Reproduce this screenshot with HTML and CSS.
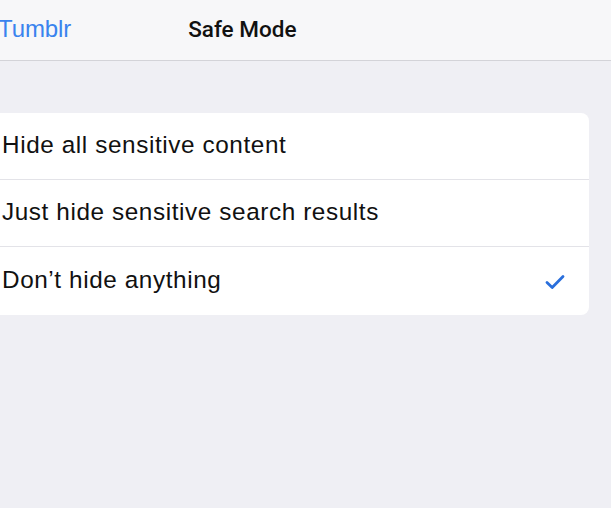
FILE: index.html
```html
<!DOCTYPE html>
<html lang="en">
<head>
<meta charset="utf-8">
<title>Safe Mode</title>
<link rel="stylesheet" href="styles.css">
</head>
<body>
<header class="navbar">
  <span class="back">Tumblr</span>
  <span class="title">Safe Mode</span>
</header>
<main class="content">
  <ul class="options">
    <li class="option">Hide all sensitive content</li>
    <li class="option">Just hide sensitive search results</li>
    <li class="option selected">Don’t hide anything
      <svg class="check" viewBox="0 0 20 16" width="20" height="16" aria-hidden="true">
        <path d="M2 8.5 L7.2 13.5 L18 2.5" fill="none" stroke="#2a6fdc" stroke-width="2.8" stroke-linecap="round" stroke-linejoin="round"/>
      </svg>
    </li>
  </ul>
</main>
</body>
</html>
```

FILE: styles.css
```css
* { box-sizing: border-box; }
html, body {
  margin: 0;
  padding: 0;
}
body {
  background: #efeff4;
  font-family: "Liberation Sans", Arial, sans-serif;
  color: #111;
  overflow: hidden;
  height: 508px;
}
.navbar {
  height: 61px;
  background: #f7f7f9;
  border-bottom: 1px solid #d3d3d8;
  display: flex;
  align-items: center;
  padding-bottom: 3px;
  gap: 117px;
}
.back {
  margin-left: -2px;
  font-size: 24px;
  color: #3a83ee;
  letter-spacing: -0.1px;
}
.title {
  font-family: Roboto, "Liberation Sans", sans-serif;
  font-size: 22.5px;
  font-weight: 500;
  color: #111;
  letter-spacing: 0;
}
.content {
  padding-top: 52px;
}
.options {
  list-style: none;
  margin: 0 22px 0 -20px;
  padding: 0;
  background: #fff;
  border-radius: 8px;
  overflow: hidden;
}
.option {
  height: 67px;
  display: flex;
  align-items: center;
  justify-content: space-between;
  padding: 0 24px 2px 22px;
  font-size: 24.3px;
  letter-spacing: 0.6px;
  border-bottom: 1px solid #e3e3e8;
}
.option:last-child {
  border-bottom: none;
  height: 68px;
}
.check {
  display: block;
  margin-top: 4px;
}
```
